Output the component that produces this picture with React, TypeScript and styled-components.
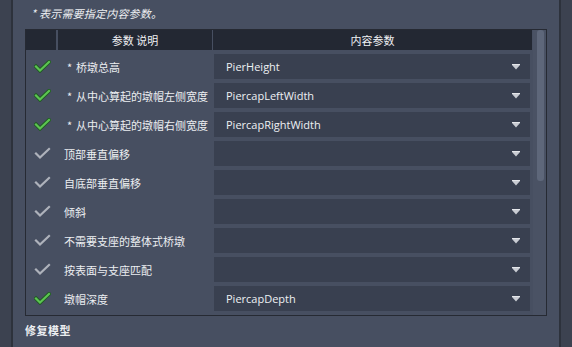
import React from "react";
import styled, { createGlobalStyle } from "styled-components";

const Global = createGlobalStyle`
  html, body { margin: 0; padding: 0; background: #3b414e; }
  body { width: 572px; height: 347px; overflow: hidden; }
  #root { width: 572px; height: 347px; }
`;

const CJK = `"Noto Sans CJK SC", "Noto Sans", sans-serif`;

const Frame = styled.div`
  display: flex;
  width: 572px;
  height: 347px;
  background: #3b414e;
`;

const SideStrip = styled.div<{ $w: number; $side: "left" | "right" }>`
  width: ${(p) => p.$w}px;
  flex: none;
  background: #3c4250;
  ${(p) => (p.$side === "left" ? "border-right" : "border-left")}: 2px solid #2d323c;
`;

const Panel = styled.div`
  flex: 1;
  background: #474f61;
  padding: 4px 12px 0 12px;
  display: flex;
  flex-direction: column;
  font-family: ${CJK};
  color: #e9eaec;
`;

const Note = styled.div`
  font-size: 11px;
  font-style: italic;
  line-height: 18px;
  height: 18px;
  padding-left: 6px;
  margin-bottom: 7px;
  color: #eef0f3;
  letter-spacing: 0.2px;
`;

const Table = styled.div`
  border: 1px solid #262a33;
  display: flex;
  width: 520px;
`;

const Content = styled.div`
  width: 507px;
  display: flex;
  flex-direction: column;
`;

const HeaderRow = styled.div`
  display: grid;
  grid-template-columns: 31px 154px 319px;
  column-gap: 1px;
  height: 20px;
  & > div:first-child { margin-right: 1px; }
`;

const HeadCell = styled.div`
  background: #232833;
  font-size: 11px;
  line-height: 20px;
  text-align: center;
  color: #f0f1f3;
`;

const Body = styled.div`
  display: flex;
  flex-direction: column;
  gap: 4px;
  padding: 4px 0;
`;

const Row = styled.div`
  display: grid;
  grid-template-columns: 32px 156px 316px;
  height: 25px;
  align-items: center;
`;

const CheckCell = styled.div`
  display: flex;
  justify-content: center;
  align-items: center;
`;

const Desc = styled.div`
  font-size: 11px;
  padding-left: 6px;
  white-space: nowrap;
  color: #eceef1;
`;

const Star = styled.span`
  display: inline-block;
  width: 9px;
  margin-left: 3px;
`;

const Select = styled.div`
  height: 25px;
  background: #394050;
  display: flex;
  align-items: center;
  justify-content: space-between;
  padding: 0 10px 0 12px;
  font-family: "Open Sans", "Noto Sans", sans-serif;
  font-size: 11px;
  color: #eef0f3;
`;

const Scroll = styled.div`
  width: 13px;
  background: #4a5264;
  display: flex;
  justify-content: center;
`;

const Thumb = styled.div`
  width: 7px;
  height: 151px;
  margin-left: 1px;
  background: #5e677a;
  border-radius: 3px;
`;

const Footer = styled.div`
  font-size: 11px;
  font-weight: bold;
  line-height: 16px;
  margin-top: 6px;
  letter-spacing: 0.5px;
  color: #eceef1;
`;

const Check = ({ on }: { on: boolean }) => (
  <svg width="17" height="13" viewBox="0 0 17 13">
    {on && (
      <path
        d="M2 6.5 L6 10.5 L15 2"
        fill="none"
        stroke="#1f5a22"
        strokeWidth="4"
        strokeLinecap="square"
      />
    )}
    <path
      d="M2 6.5 L6 10.5 L15 2"
      fill="none"
      stroke={on ? "#5cc452" : "#aeb2bb"}
      strokeWidth="2.2"
      strokeLinecap="square"
    />
  </svg>
);

const Arrow = () => (
  <svg width="8" height="6" viewBox="0 0 8 6">
    <rect x="0" y="0" width="8" height="1" fill="#e4e6ea" />
    <path d="M0 1 L8 1 L4 5.5 Z" fill="#c9ccd3" />
  </svg>
);

const rows: { on: boolean; req: boolean; label: string; value: string }[] = [
  { on: true, req: true, label: "桥墩总高", value: "PierHeight" },
  { on: true, req: true, label: "从中心算起的墩帽左侧宽度", value: "PiercapLeftWidth" },
  { on: true, req: true, label: "从中心算起的墩帽右侧宽度", value: "PiercapRightWidth" },
  { on: false, req: false, label: "顶部垂直偏移", value: "" },
  { on: false, req: false, label: "自底部垂直偏移", value: "" },
  { on: false, req: false, label: "倾斜", value: "" },
  { on: false, req: false, label: "不需要支座的整体式桥墩", value: "" },
  { on: false, req: false, label: "按表面与支座匹配", value: "" },
  { on: true, req: false, label: "墩帽深度", value: "PiercapDepth" },
];

export default function App() {
  return (
    <>
      <Global />
      <Frame>
        <SideStrip $w={11} $side="left" />
        <Panel>
          <Note>* 表示需要指定内容参数。</Note>
          <Table>
            <Content>
              <HeaderRow>
                <HeadCell />
                <HeadCell>参数 说明</HeadCell>
                <HeadCell>内容参数</HeadCell>
              </HeaderRow>
              <Body>
                {rows.map((r) => (
                  <Row key={r.label}>
                    <CheckCell>
                      <Check on={r.on} />
                    </CheckCell>
                    <Desc>
                      {r.req && <Star>*</Star>}
                      {r.label}
                    </Desc>
                    <Select>
                      <span>{r.value}</span>
                      <Arrow />
                    </Select>
                  </Row>
                ))}
              </Body>
            </Content>
            <Scroll>
              <Thumb />
            </Scroll>
          </Table>
          <Footer>修复模型</Footer>
        </Panel>
        <SideStrip $w={11} $side="right" />
      </Frame>
    </>
  );
}
